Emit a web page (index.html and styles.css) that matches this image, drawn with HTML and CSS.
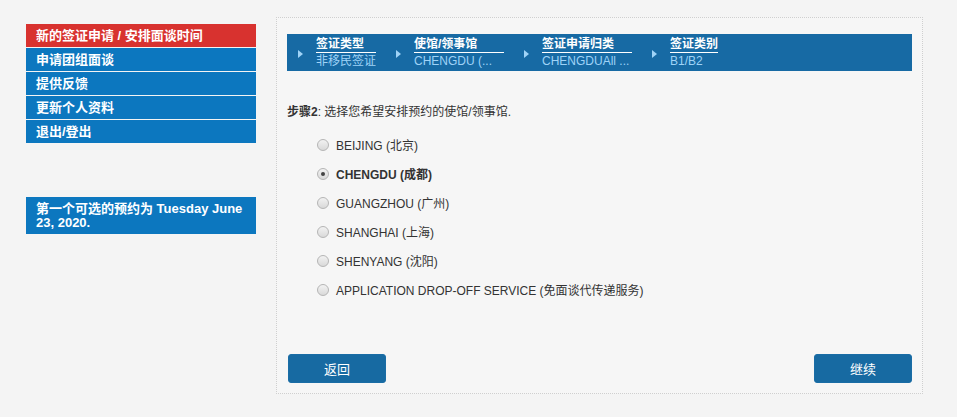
FILE: index.html
```html
<!DOCTYPE html>
<html lang="zh-CN">
<head>
<meta charset="utf-8">
<title>安排面谈时间</title>
<link rel="stylesheet" href="styles.css">
</head>
<body>
<div class="page">
  <aside class="sidebar">
    <ul class="menu">
      <li class="menu-item active">新的签证申请 / 安排面谈时间</li>
      <li class="menu-item">申请团组面谈</li>
      <li class="menu-item">提供反馈</li>
      <li class="menu-item">更新个人资料</li>
      <li class="menu-item">退出/登出</li>
    </ul>
    <div class="info">第一个可选的预约为 Tuesday June<br>23, 2020.</div>
  </aside>
  <main class="panel">
    <div class="steps">
      <div class="step">
        <span class="arrow"></span>
        <div class="step-col">
          <div class="step-label">签证类型</div>
          <div class="step-value">非移民签证</div>
        </div>
      </div>
      <div class="step">
        <span class="arrow"></span>
        <div class="step-col wide">
          <div class="step-label">使馆/领事馆</div>
          <div class="step-value">CHENGDU (...</div>
        </div>
      </div>
      <div class="step">
        <span class="arrow"></span>
        <div class="step-col wide">
          <div class="step-label">签证申请归类</div>
          <div class="step-value">CHENGDUAll ...</div>
        </div>
      </div>
      <div class="step">
        <span class="arrow"></span>
        <div class="step-col">
          <div class="step-label">签证类别</div>
          <div class="step-value">B1/B2</div>
        </div>
      </div>
    </div>
    <p class="prompt"><b>步骤2</b>: 选择您希望安排预约的使馆/领事馆.</p>
    <ul class="options">
      <li class="option"><span class="radio"></span>BEIJING (北京)</li>
      <li class="option selected"><span class="radio checked"></span>CHENGDU (成都)</li>
      <li class="option"><span class="radio"></span>GUANGZHOU (广州)</li>
      <li class="option"><span class="radio"></span>SHANGHAI (上海)</li>
      <li class="option"><span class="radio"></span>SHENYANG (沈阳)</li>
      <li class="option"><span class="radio"></span>APPLICATION DROP-OFF SERVICE (免面谈代传递服务)</li>
    </ul>
    <div class="actions">
      <button class="btn">返回</button>
      <button class="btn">继续</button>
    </div>
  </main>
</div>
</body>
</html>
```
FILE: styles.css
```css
* { box-sizing: border-box; }
html, body { margin: 0; padding: 0; }
body {
  background: #f4f4f4;
  font-family: "Liberation Sans", "Noto Sans CJK SC", sans-serif;
  color: #333;
  width: 957px;
  height: 417px;
  overflow: hidden;
}
.page {
  display: flex;
  align-items: flex-start;
  gap: 20px;
  padding: 17px 0 0 26px;
}
.sidebar {
  width: 230px;
  margin-top: 7px;
  display: flex;
  flex-direction: column;
}
.menu {
  list-style: none;
  margin: 0;
  padding: 0;
  display: flex;
  flex-direction: column;
  gap: 1px;
}
.menu-item {
  height: 23px;
  line-height: 23px;
  padding-left: 10px;
  background: #0c77bf;
  color: #fff;
  font-size: 13px;
  font-weight: bold;
}
.menu-item.active { background: #d8322f; }
.info {
  margin-top: 54px;
  background: #0c77bf;
  color: #fff;
  font-size: 13px;
  font-weight: bold;
  line-height: 14px;
  padding: 5px 10px 4px 10px;
  height: 37px;
}
.panel {
  width: 647px;
  height: 377px;
  background: #f6f6f6;
  border: 1px dotted #cfcfcf;
  padding: 16px 10px 10px 10px;
  display: flex;
  flex-direction: column;
}
.steps {
  height: 37px;
  background: #176aa4;
  display: flex;
  align-items: center;
  gap: 20px;
  padding-left: 11px;
}
.step {
  display: flex;
  align-items: center;
  gap: 13px;
}
.arrow {
  width: 0;
  height: 0;
  border-top: 4px solid transparent;
  border-bottom: 4px solid transparent;
  border-left: 5px solid #9fd3f7;
  margin-top: 2px;
}
.step-col { display: flex; flex-direction: column; }
.step-col.wide { width: 90px; }
.step-label {
  color: #fff;
  font-size: 12px;
  font-weight: bold;
  line-height: 15px;
  border-bottom: 1px solid #fff;
  white-space: nowrap;
}
.step-value {
  color: #9fd3f7;
  font-size: 12px;
  line-height: 16px;
  white-space: nowrap;
  overflow: hidden;
}
.prompt {
  margin: 33px 0 0 0;
  font-size: 12px;
  line-height: 16px;
  color: #333;
}
.options {
  list-style: none;
  margin: 10px 0 0 0;
  padding: 0 0 0 30px;
}
.option {
  display: flex;
  align-items: center;
  height: 29px;
  font-size: 12px;
  color: #333;
}
.option.selected { font-weight: bold; }
.radio {
  width: 12px;
  height: 12px;
  border-radius: 50%;
  border: 1px solid #b5b5b5;
  background: linear-gradient(#f2f2f2, #d9d9d9);
  margin-right: 7px;
  display: flex;
  align-items: center;
  justify-content: center;
}
.radio.checked::after {
  content: "";
  width: 4px;
  height: 4px;
  border-radius: 50%;
  background: #444;
}
.actions {
  margin-top: auto;
  display: flex;
  justify-content: space-between;
  padding-left: 1px;
}
.btn {
  width: 98px;
  height: 29px;
  border: 1px solid #1a6da6;
  border-radius: 3px;
  background: #176aa2;
  color: #fff;
  font-family: "Liberation Sans", "Noto Sans CJK SC", sans-serif;
  font-size: 13px;
  padding: 0;
}
```
